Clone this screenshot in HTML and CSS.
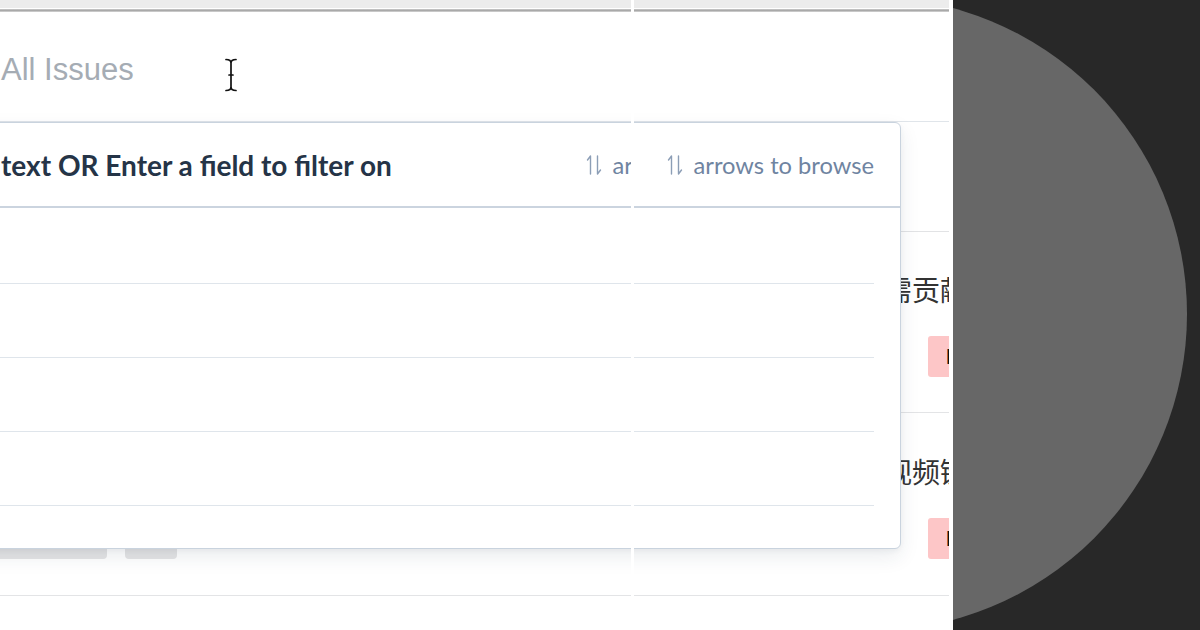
FILE: index.html
```html
<!DOCTYPE html>
<html>
<head>
<meta charset="utf-8">
<link rel="stylesheet" href="styles.css">
</head>
<body>
<div class="screen">
  <div class="panel panel-left">
    <div class="page">
      <div class="topbar"></div>
      <div class="topline"></div>
      <div class="search">
        <span class="placeholder">All Issues</span>
        <svg class="ibeam" width="16" height="36" viewBox="0 0 16 36"><path d="M3 2.5C5.5 2.5 8 3.5 8 6M13 2.5C10.5 2.5 8 3.5 8 6V30C8 32.5 5.5 33.5 3 33.5M8 30C8 32.5 10.5 33.5 13 33.5M6 18H10" fill="none" stroke="#111" stroke-width="1.7" stroke-linecap="round"/></svg>
      </div>
      <div class="table">
        <div class="thead"></div>
        <div class="row">
          <div class="title">数据需贡献</div>
          <div class="ptags"><span class="tag-pink">Bug</span></div>
        </div>
        <div class="row row-b">
          <div class="title">查看视频链接</div>
          <div class="tags"><span class="tag tag-wide">Technology</span><span class="tag">gy</span></div>
          <div class="ptags"><span class="tag-pink">Bug</span></div>
        </div>
      </div>
      <div class="dropdown">
        <div class="dd-head">
          <span class="dd-title">text OR Enter a field to filter on</span>
          <span class="dd-hint"><svg class="arrows" width="16" height="22" viewBox="0 0 16 22"><path d="M4.5 20V2L1.5 6M11.5 2V20L14.5 16" fill="none" stroke="#8c9eb6" stroke-width="1.4" stroke-linecap="round" stroke-linejoin="round"/></svg>arrows to browse</span>
        </div>
        <div class="dd-row dd-first"></div>
        <div class="dd-row"></div>
        <div class="dd-row"></div>
        <div class="dd-row"></div>
        <div class="dd-row dd-last"></div>
      </div>
    </div>
  </div>
  <div class="seam"></div>
  <div class="panel panel-mid">
    <div class="page page-shift">
      <div class="topbar"></div>
      <div class="topline"></div>
      <div class="search">
        <span class="placeholder">All Issues</span>
        <svg class="ibeam" width="16" height="36" viewBox="0 0 16 36"><path d="M3 2.5C5.5 2.5 8 3.5 8 6M13 2.5C10.5 2.5 8 3.5 8 6V30C8 32.5 5.5 33.5 3 33.5M8 30C8 32.5 10.5 33.5 13 33.5M6 18H10" fill="none" stroke="#111" stroke-width="1.7" stroke-linecap="round"/></svg>
      </div>
      <div class="table">
        <div class="thead"></div>
        <div class="row">
          <div class="title">数据需贡献</div>
          <div class="ptags"><span class="tag-pink">Bug</span></div>
        </div>
        <div class="row row-b">
          <div class="title">查看视频链接</div>
          <div class="tags"><span class="tag tag-wide">Technology</span><span class="tag">gy</span></div>
          <div class="ptags"><span class="tag-pink">Bug</span></div>
        </div>
      </div>
      <div class="dropdown">
        <div class="dd-head">
          <span class="dd-title">text OR Enter a field to filter on</span>
          <span class="dd-hint"><svg class="arrows" width="16" height="22" viewBox="0 0 16 22"><path d="M4.5 20V2L1.5 6M11.5 2V20L14.5 16" fill="none" stroke="#8c9eb6" stroke-width="1.4" stroke-linecap="round" stroke-linejoin="round"/></svg>arrows to browse</span>
        </div>
        <div class="dd-row dd-first"></div>
        <div class="dd-row"></div>
        <div class="dd-row"></div>
        <div class="dd-row"></div>
        <div class="dd-row dd-last"></div>
      </div>
    </div>
  </div>
  <div class="seam seam-wide"></div>
  <div class="dark"><div class="disc"></div></div>
</div>
</body>
</html>
```
FILE: styles.css
```css
html, body {
  margin: 0;
  padding: 0;
}
body {
  width: 1200px;
  height: 630px;
  overflow: hidden;
  background: #fff;
  font-family: "Liberation Sans", Arial, sans-serif;
}
.screen {
  display: flex;
  height: 630px;
}
.panel {
  flex: none;
  height: 630px;
  overflow: hidden;
  background: #fff;
}
.panel-left { width: 631px; }
.panel-mid { width: 315px; }
.seam { flex: none; width: 3px; background: #fff; }
.seam-wide { width: 4px; }
.page {
  position: relative;
  width: 868px;
}
.page-shift { margin-left: -553px; }

.topbar { height: 8px; background: #ececec; }
.topline {
  height: 3px;
  margin-top: 1px;
  background: linear-gradient(#cbcbcb, #a9a9a9 50%, #d8d8d8);
}
.search {
  height: 110px;
  box-sizing: border-box;
  padding: 6px 0 0 1px;
  border-bottom: 1px solid #e0e5ea;
  display: flex;
  align-items: center;
}
.placeholder {
  font-size: 31px;
  color: #a5acb4;
}
.ibeam {
  margin-left: 89px;
  margin-top: 10px;
}

.thead {
  height: 109px;
  border-bottom: 1px solid #e2e3e5;
}
.row {
  display: grid;
  grid-template-columns: 747px 121px;
  grid-template-rows: 34px 41px;
  row-gap: 30px;
  padding: 40px 0 35px;
  border-bottom: 1px solid #e3e4e6;
}
.row-b { padding: 41px 0 36px; }
.title {
  grid-column: 2;
  grid-row: 1;
  font-family: "Noto Sans CJK SC", sans-serif;
  font-size: 28px;
  line-height: 34px;
  color: #333;
  white-space: nowrap;
}
.tags {
  grid-column: 1;
  grid-row: 2;
  display: flex;
  gap: 18px;
}
.tag {
  width: 52px;
  height: 41px;
  border-radius: 4px;
  background: #e4e4e5;
  color: #555;
  font-size: 20px;
  line-height: 24px;
  text-align: center;
  overflow: hidden;
}
.tag-wide {
  width: 147px;
  margin-left: -40px;
}
.ptags {
  grid-column: 2;
  grid-row: 2;
  padding-left: 100px;
}
.tag-pink {
  display: inline-block;
  height: 41px;
  padding: 0 12px 0 18px;
  border-radius: 3px;
  background: #fdc6c7;
  color: #111;
  font-weight: 700;
  font-size: 22px;
  line-height: 41px;
}

.dropdown {
  position: absolute;
  z-index: 2;
  top: 122px;
  left: -300px;
  width: 1120px;
  height: 427px;
  box-sizing: border-box;
  border: 1px solid #c9d3de;
  border-radius: 6px;
  background: #fff;
  overflow: hidden;
  box-shadow: 0 8px 20px rgba(30, 50, 80, 0.09), 0 2px 5px rgba(30, 50, 80, 0.05);
}
.dd-head {
  height: 85px;
  box-sizing: border-box;
  border-bottom: 2px solid #cbd4df;
  display: flex;
  align-items: center;
  padding: 0 26px 0 300px;
}
.dd-title {
  font-family: Lato, "Open Sans", sans-serif;
  font-weight: 700;
  font-size: 28px;
  color: #253447;
  white-space: nowrap;
}
.dd-hint {
  margin-left: auto;
  display: flex;
  align-items: center;
  gap: 11px;
  font-family: Lato, "Open Sans", sans-serif;
  font-size: 23.7px;
  color: #6f84a1;
  white-space: nowrap;
}
.dd-row {
  height: 74px;
  box-sizing: border-box;
  margin-right: 26px;
  border-bottom: 1px solid #dfe5eb;
}
.dd-first { height: 76px; }
.dd-last { border-bottom: 0; }

.dark {
  flex: 1;
  position: relative;
  overflow: hidden;
  background: #282828;
}
.disc {
  position: absolute;
  left: -400px;
  top: -3px;
  width: 634px;
  height: 634px;
  border-radius: 50%;
  background: #676767;
}
```
